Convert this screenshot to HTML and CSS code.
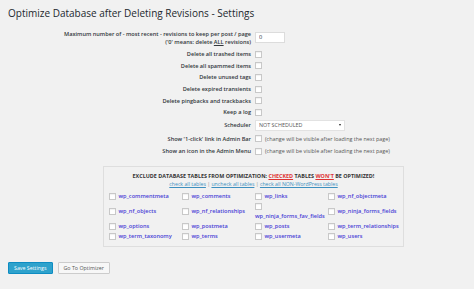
FILE: index.html
```html
<!DOCTYPE html>
<html lang="en">
<head>
    <meta charset="UTF-8">
    <title>Optimize Database after Deleting Revisions - Settings</title>
    <link rel="stylesheet" href="styles.css">
</head>
<body>
    <div class="wrap">
        <h1>Optimize Database after Deleting Revisions - Settings</h1>

        <form>
            <div class="settings">
                <div class="row row-first">
                    <label>Maximum number of - most recent - revisions to keep per post / page<br>('0' means: delete <u>ALL</u> revisions)</label>
                    <div class="field"><input type="text" class="small-text" value="0"></div>
                </div>
                <div class="row">
                    <label>Delete all trashed items</label>
                    <div class="field"><input type="checkbox"></div>
                </div>
                <div class="row">
                    <label>Delete all spammed items</label>
                    <div class="field"><input type="checkbox"></div>
                </div>
                <div class="row">
                    <label>Delete unused tags</label>
                    <div class="field"><input type="checkbox"></div>
                </div>
                <div class="row">
                    <label>Delete expired transients</label>
                    <div class="field"><input type="checkbox"></div>
                </div>
                <div class="row">
                    <label>Delete pingbacks and trackbacks</label>
                    <div class="field"><input type="checkbox"></div>
                </div>
                <div class="row">
                    <label>Keep a log</label>
                    <div class="field"><input type="checkbox"></div>
                </div>
                <div class="row row-scheduler">
                    <label>Scheduler</label>
                    <div class="field">
                        <span class="select-wrap">
                            <select>
                                <option>NOT SCHEDULED</option>
                            </select>
                        </span>
                    </div>
                </div>
                <div class="row row-adminbar">
                    <label>Show '1-click' link in Admin Bar</label>
                    <div class="field"><input type="checkbox"><span class="note">(change will be visible after loading the next page)</span></div>
                </div>
                <div class="row row-menu">
                    <label>Show an icon in the Admin Menu</label>
                    <div class="field"><input type="checkbox"><span class="note">(change will be visible after loading the next page)</span></div>
                </div>
            </div>

            <div class="exclude">
                <div class="exclude-title">
                    Exclude database tables from optimization: <span class="warn">checked</span> tables <span class="warn">won't</span> be optimized!
                </div>
                <div class="exclude-links">
                    <a href="#">check all tables</a> | <a href="#">uncheck all tables</a> | <a href="#">check all NON-WordPress tables</a>
                </div>
                <div class="tables">
                    <label class="table-item"><input type="checkbox"> wp_commentmeta</label>
                    <label class="table-item"><input type="checkbox"> wp_comments</label>
                    <label class="table-item"><input type="checkbox"> wp_links</label>
                    <label class="table-item"><input type="checkbox"> wp_nf_objectmeta</label>
                    <label class="table-item"><input type="checkbox"> wp_nf_objects</label>
                    <label class="table-item"><input type="checkbox"> wp_nf_relationships</label>
                    <label class="table-item"><input type="checkbox"> wp_ninja_forms_fav_fields</label>
                    <label class="table-item"><input type="checkbox"> wp_ninja_forms_fields</label>
                    <label class="table-item"><input type="checkbox"> wp_options</label>
                    <label class="table-item"><input type="checkbox"> wp_postmeta</label>
                    <label class="table-item"><input type="checkbox"> wp_posts</label>
                    <label class="table-item"><input type="checkbox"> wp_term_relationships</label>
                    <label class="table-item"><input type="checkbox"> wp_term_taxonomy</label>
                    <label class="table-item"><input type="checkbox"> wp_terms</label>
                    <label class="table-item"><input type="checkbox"> wp_usermeta</label>
                    <label class="table-item"><input type="checkbox"> wp_users</label>
                </div>
            </div>

            <p class="submit">
                <button type="button" class="button button-primary">Save Settings</button>
                <button type="button" class="button">Go To Optimizer</button>
            </p>
        </form>
    </div>
</body>
</html>
```

FILE: styles.css
```css
body {
    margin: 0;
    background-color: #f1f1f1;
    color: #32373c;
    font-family: 'Open Sans', 'Noto Sans', sans-serif;
    font-size: 5.6px;
}

.wrap {
    padding-left: 8px;
    height: 289px;
    box-sizing: border-box;
}

h1 {
    margin: 0;
    padding-top: 5px;
    font-size: 10px;
    line-height: 16px;
    font-weight: 400;
    color: #23282d;
}

form {
    margin: 0;
}

.settings {
    margin-top: 7px;
}

.row {
    display: grid;
    grid-template-columns: 243px auto;
    column-gap: 4px;
    align-items: center;
    height: 11.6px;
}

.row label {
    text-align: right;
    font-weight: 600;
    line-height: 8px;
}

.row-first {
    height: 20.5px;
}

.row-scheduler {
    height: 14px;
}

.row-adminbar {
    height: 13.5px;
}

.row-menu {
    height: 11px;
}

.field {
    display: flex;
    align-items: center;
}

input[type="checkbox"] {
    appearance: none;
    width: 7px;
    height: 7px;
    margin: 0;
    border: 1px solid #c8c8c8;
    background-color: #fff;
    box-sizing: border-box;
    box-shadow: inset 0 1px 1px rgba(0, 0, 0, 0.06);
}

.small-text {
    width: 30px;
    height: 11px;
    margin: -2px 0 0 0;
    padding: 0 3px;
    border: 1px solid #dcdcdc;
    background-color: #fff;
    box-sizing: border-box;
    font-family: inherit;
    font-size: 5.6px;
    color: #32373c;
}

.select-wrap {
    position: relative;
    display: inline-block;
}

.select-wrap::after {
    content: '';
    position: absolute;
    right: 4px;
    top: 4.5px;
    border-left: 1.6px solid transparent;
    border-right: 1.6px solid transparent;
    border-top: 2px solid #222;
}

select {
    appearance: none;
    width: 90px;
    height: 11px;
    margin: 0;
    padding: 0 3px;
    border: 1px solid #e2e2e2;
    background-color: #fff;
    font-family: inherit;
    font-size: 5.4px;
    color: #555;
}

.note {
    margin-left: 3px;
    font-size: 5.4px;
    color: #555;
}

.exclude {
    width: 301px;
    margin: 9.4px 0 0 95px;
    padding: 5px 5px;
    border: 1px solid #dedede;
    box-sizing: border-box;
    text-align: center;
}

.exclude-title {
    font-size: 5.4px;
    line-height: 8px;
    font-weight: 700;
    text-transform: uppercase;
    color: #333;
}

.warn {
    color: #dd3333;
    text-decoration: underline;
}

.exclude-links {
    font-size: 5.2px;
    line-height: 8px;
    color: #888;
}

.exclude-links a {
    color: #3d8fbf;
}

.tables {
    display: grid;
    grid-template-columns: repeat(4, 73px);
    align-items: center;
    margin-top: 2.7px;
    text-align: left;
}

.table-item {
    line-height: 10px;
    font-weight: 600;
    color: #4a3fd6;
}

.table-item input {
    margin-right: 1px;
    vertical-align: middle;
}

.submit {
    display: flex;
    gap: 5px;
    margin: 15.3px 0 0 0;
}

.button {
    height: 12px;
    padding: 0 5px;
    border: 1px solid #cccccc;
    border-radius: 1px;
    background-color: #f7f7f7;
    font-family: inherit;
    font-size: 5.3px;
    color: #555;
}

.button-primary {
    border-color: #0e8cc2;
    background-color: #2ea2cc;
    color: #fff;
}
```
